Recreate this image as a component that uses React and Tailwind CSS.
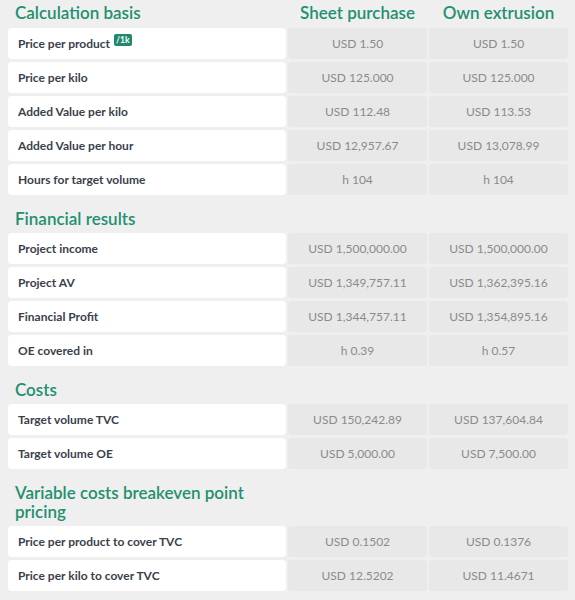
const sections = [
  {
    title: "Calculation basis",
    showCols: true,
    rows: [
      { label: "Price per product", badge: "/1k", a: "USD 1.50", b: "USD 1.50" },
      { label: "Price per kilo", a: "USD 125.000", b: "USD 125.000" },
      { label: "Added Value per kilo", a: "USD 112.48", b: "USD 113.53" },
      { label: "Added Value per hour", a: "USD 12,957.67", b: "USD 13,078.99" },
      { label: "Hours for target volume", a: "h 104", b: "h 104" },
    ],
  },
  {
    title: "Financial results",
    rows: [
      { label: "Project income", a: "USD 1,500,000.00", b: "USD 1,500,000.00" },
      { label: "Project AV", a: "USD 1,349,757.11", b: "USD 1,362,395.16" },
      { label: "Financial Profit", a: "USD 1,344,757.11", b: "USD 1,354,895.16" },
      { label: "OE covered in", a: "h 0.39", b: "h 0.57" },
    ],
  },
  {
    title: "Costs",
    rows: [
      { label: "Target volume TVC", a: "USD 150,242.89", b: "USD 137,604.84" },
      { label: "Target volume OE", a: "USD 5,000.00", b: "USD 7,500.00" },
    ],
  },
  {
    title: "Variable costs breakeven point pricing",
    rows: [
      { label: "Price per product to cover TVC", a: "USD 0.1502", b: "USD 0.1376" },
      { label: "Price per kilo to cover TVC", a: "USD 12.5202", b: "USD 11.4671" },
    ],
  },
];

const baseFont = { fontFamily: "Lato, 'Noto Sans', sans-serif" };

function Section({ section, first }) {
  return (
    <div>
      <div className={`grid grid-cols-[278px_139px_139px] gap-x-[2px] ${first ? "pt-[3px] pb-[6px]" : "pt-[14px] pb-[5px]"}`}>
        <h2 className="pl-[7px] pr-10 text-[17px] font-semibold leading-[19px] text-[#22906f]">{section.title}</h2>
        {section.showCols ? (
          <>
            <div className="text-center text-[17px] font-semibold leading-[19px] text-[#22906f]">Sheet purchase</div>
            <div className="text-center text-[17px] font-semibold leading-[19px] text-[#22906f]">Own extrusion</div>
          </>
        ) : null}
      </div>
      <div className="flex flex-col gap-[3px]">
        {section.rows.map((row) => (
          <div key={row.label} className="grid h-[31px] grid-cols-[278px_139px_139px] gap-x-[2px]">
            <div className="flex items-center gap-[4px] rounded-[4px] bg-white pl-[10px] text-[12px] font-bold text-[#3b3f4c]">
              <span>{row.label}</span>
              {row.badge ? (
                <span className="mb-[7px] rounded-[2px] bg-[#1f8a6b] px-[2px] text-[8.5px] font-bold leading-[12px] text-white">{row.badge}</span>
              ) : null}
            </div>
            <div className="flex items-center justify-center rounded-[3px] bg-[#e8e8e8] text-[12px] text-[#8b8b8b]">{row.a}</div>
            <div className="flex items-center justify-center rounded-[3px] bg-[#e8e8e8] text-[12px] text-[#8b8b8b]">{row.b}</div>
          </div>
        ))}
      </div>
    </div>
  );
}

export default function App() {
  return (
    <div className="min-h-[600px] bg-[#efefef] pl-[8px]" style={baseFont}>
      {sections.map((section, index) => (
        <Section key={section.title} section={section} first={index === 0} />
      ))}
    </div>
  );
}
